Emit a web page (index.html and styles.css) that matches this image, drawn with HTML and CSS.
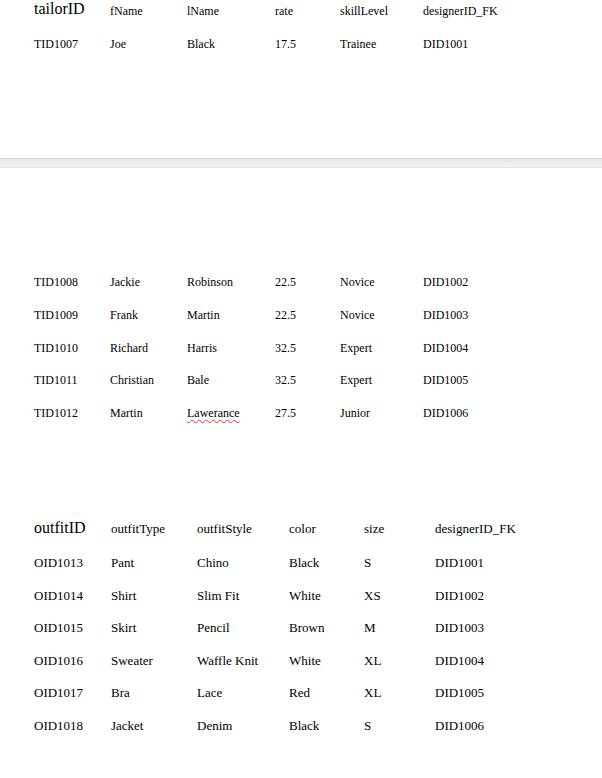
FILE: index.html
```html
<!DOCTYPE html>
<html lang="en">
  <head>
    <meta charset="UTF-8" />
    <meta name="viewport" content="width=device-width, initial-scale=1.0" />
    <title>Tailor and Outfit Tables</title>
    <link rel="stylesheet" href="styles.css">
  </head>
  <body>
    <div class="page page-first">
      <table class="grid tailor">
        <colgroup>
          <col class="c1" /><col class="c2" /><col class="c3" /><col class="c4" /><col class="c5" /><col />
        </colgroup>
        <tr class="head">
          <td class="key">tailorID</td>
          <td>fName</td>
          <td>lName</td>
          <td>rate</td>
          <td>skillLevel</td>
          <td>designerID_FK</td>
        </tr>
        <tr>
          <td>TID1007</td>
          <td>Joe</td>
          <td>Black</td>
          <td>17.5</td>
          <td>Trainee</td>
          <td>DID1001</td>
        </tr>
      </table>
    </div>

    <div class="page-break"></div>

    <div class="page">
      <table class="grid tailor continued">
        <colgroup>
          <col class="c1" /><col class="c2" /><col class="c3" /><col class="c4" /><col class="c5" /><col />
        </colgroup>
        <tr>
          <td>TID1008</td><td>Jackie</td><td>Robinson</td><td>22.5</td><td>Novice</td><td>DID1002</td>
        </tr>
        <tr>
          <td>TID1009</td><td>Frank</td><td>Martin</td><td>22.5</td><td>Novice</td><td>DID1003</td>
        </tr>
        <tr>
          <td>TID1010</td><td>Richard</td><td>Harris</td><td>32.5</td><td>Expert</td><td>DID1004</td>
        </tr>
        <tr>
          <td>TID1011</td><td>Christian</td><td>Bale</td><td>32.5</td><td>Expert</td><td>DID1005</td>
        </tr>
        <tr>
          <td>TID1012</td><td>Martin</td><td><span class="misspelled">Lawerance</span></td><td>27.5</td><td>Junior</td><td>DID1006</td>
        </tr>
      </table>

      <table class="grid outfit">
        <colgroup>
          <col class="c1" /><col class="c2" /><col class="c3" /><col class="c4" /><col class="c5" /><col />
        </colgroup>
        <tr class="head">
          <td class="key">outfitID</td>
          <td>outfitType</td>
          <td>outfitStyle</td>
          <td>color</td>
          <td>size</td>
          <td>designerID_FK</td>
        </tr>
        <tr>
          <td>OID1013</td><td>Pant</td><td>Chino</td><td>Black</td><td>S</td><td>DID1001</td>
        </tr>
        <tr>
          <td>OID1014</td><td>Shirt</td><td>Slim Fit</td><td>White</td><td>XS</td><td>DID1002</td>
        </tr>
        <tr>
          <td>OID1015</td><td>Skirt</td><td>Pencil</td><td>Brown</td><td>M</td><td>DID1003</td>
        </tr>
        <tr>
          <td>OID1016</td><td>Sweater</td><td>Waffle Knit</td><td>White</td><td>XL</td><td>DID1004</td>
        </tr>
        <tr>
          <td>OID1017</td><td>Bra</td><td>Lace</td><td>Red</td><td>XL</td><td>DID1005</td>
        </tr>
        <tr>
          <td>OID1018</td><td>Jacket</td><td>Denim</td><td>Black</td><td>S</td><td>DID1006</td>
        </tr>
      </table>
    </div>
  </body>
</html>
```

FILE: styles.css
```css
body {
  margin: 0;
  background-color: white;
  color: #000;
  font-family: "Liberation Serif", "Times New Roman", serif;
}
.page {
  padding-left: 34px;
}
.page-first {
  height: 158px;
  box-sizing: border-box;
}
.page-break {
  height: 8px;
  border-top: 1px solid #d3d6d8;
  border-bottom: 1px solid #e2e4e6;
  background: linear-gradient(#e4e6e8, #f2f3f5);
}

.grid {
  border-collapse: collapse;
  table-layout: fixed;
  width: 520px;
}
.grid td {
  padding: 10px 0 0;
  line-height: 15px;
  vertical-align: top;
  white-space: nowrap;
}

/* tailor table */
.tailor {
  font-size: 12px;
}
.tailor tr {
  height: 32.8px;
}
.tailor .c1 { width: 76px; }
.tailor .c2 { width: 77px; }
.tailor .c3 { width: 88px; }
.tailor .c4 { width: 65px; }
.tailor .c5 { width: 83px; }
.tailor tr.head {
  height: 27px;
}
.tailor .head td {
  padding-top: 4px;
}
.tailor .head td.key {
  padding-top: 3px;
  font-size: 16px;
  line-height: 12px;
}
.continued {
  margin-top: 97px;
}

/* outfit table */
.outfit {
  margin-top: 88px;
  font-size: 13px;
}
.outfit tr {
  height: 32.6px;
}
.outfit .c1 { width: 77px; }
.outfit .c2 { width: 86px; }
.outfit .c3 { width: 92px; }
.outfit .c4 { width: 75px; }
.outfit .c5 { width: 71px; }
.outfit tr.head {
  height: 28px;
}
.outfit .head td {
  padding-top: 4px;
}
.outfit .head td.key {
  padding-top: 5px;
  font-size: 16px;
  line-height: 12px;
}

.misspelled {
  text-decoration: underline wavy #e0352b;
  text-decoration-thickness: 1px;
  text-underline-offset: 2px;
  text-decoration-skip-ink: none;
}
```
